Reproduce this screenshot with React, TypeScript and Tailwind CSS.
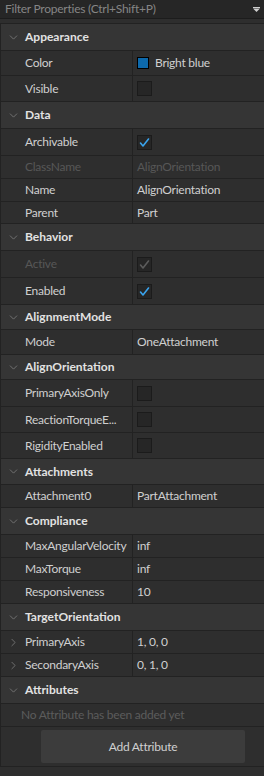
import { ChevronDown, ChevronRight } from 'lucide-react'

type Row =
  | { kind: 'header'; label: string; h: string }
  | { kind: 'text'; label: string; value?: string; h: string; muted?: boolean; expand?: boolean }
  | { kind: 'check'; label: string; checked?: boolean; h: string; muted?: boolean }
  | { kind: 'color'; label: string; value: string; h: string }
  | { kind: 'note'; label: string; h: string }

const rows: Row[] = [
  { kind: 'header', label: 'Appearance', h: 'h-[27px]' },
  { kind: 'color', label: 'Color', value: 'Bright blue', h: 'h-[25px]' },
  { kind: 'check', label: 'Visible', h: 'h-[26px]' },
  { kind: 'header', label: 'Data', h: 'h-[27px]' },
  { kind: 'check', label: 'Archivable', checked: true, h: 'h-[27px]' },
  { kind: 'text', label: 'ClassName', value: 'AlignOrientation', muted: true, h: 'h-[23px]' },
  { kind: 'text', label: 'Name', value: 'AlignOrientation', h: 'h-[23px]' },
  { kind: 'text', label: 'Parent', value: 'Part', h: 'h-[22px]' },
  { kind: 'header', label: 'Behavior', h: 'h-[27px]' },
  { kind: 'check', label: 'Active', checked: true, muted: true, h: 'h-[27px]' },
  { kind: 'check', label: 'Enabled', checked: true, h: 'h-[27px]' },
  { kind: 'header', label: 'AlignmentMode', h: 'h-[25px]' },
  { kind: 'text', label: 'Mode', value: 'OneAttachment', h: 'h-[25px]' },
  { kind: 'header', label: 'AlignOrientation', h: 'h-[25px]' },
  { kind: 'check', label: 'PrimaryAxisOnly', h: 'h-[27px]' },
  { kind: 'check', label: 'ReactionTorqueE...', h: 'h-[26px]' },
  { kind: 'check', label: 'RigidityEnabled', h: 'h-[26px]' },
  { kind: 'header', label: 'Attachments', h: 'h-[26px]' },
  { kind: 'text', label: 'Attachment0', value: 'PartAttachment', h: 'h-[23px]' },
  { kind: 'header', label: 'Compliance', h: 'h-[27px]' },
  { kind: 'text', label: 'MaxAngularVelocity', value: 'inf', h: 'h-[23px]' },
  { kind: 'text', label: 'MaxTorque', value: 'inf', h: 'h-[23px]' },
  { kind: 'text', label: 'Responsiveness', value: '10', h: 'h-[23px]' },
  { kind: 'header', label: 'TargetOrientation', h: 'h-[27px]' },
  { kind: 'text', label: 'PrimaryAxis', value: '1, 0, 0', expand: true, h: 'h-[23px]' },
  { kind: 'text', label: 'SecondaryAxis', value: '0, 1, 0', expand: true, h: 'h-[23px]' },
  { kind: 'header', label: 'Attributes', h: 'h-[27px]' },
  { kind: 'note', label: 'No Attribute has been added yet', h: 'h-[23px]' },
]

function CheckBox({ checked, muted }: { checked?: boolean; muted?: boolean }) {
  return (
    <div className="w-[15px] h-[15px] bg-[#262626] border border-[#1b1b1b]">
      {checked && (
        <svg width="13" height="13" viewBox="0 0 13 13">
          <path
            d="M2.5 7 L5 10 L10.5 3"
            fill="none"
            stroke={muted ? '#5c5c5c' : '#3aa4ee'}
            strokeWidth="1.6"
            strokeLinecap="round"
            strokeLinejoin="round"
          />
        </svg>
      )}
    </div>
  )
}

function PropRow({ row }: { row: Row }) {
  if (row.kind === 'header') {
    return (
      <div className={`${row.h} flex items-center bg-[#353535] border-b border-[#222222]`}>
        <div className="w-[24px] shrink-0 flex justify-center">
          <ChevronDown size={13} strokeWidth={1.25} className="text-[#8c8c8c]" />
        </div>
        <span className="font-bold text-[#e2e2e2] text-[12px]">{row.label}</span>
      </div>
    )
  }
  if (row.kind === 'note') {
    return (
      <div className={`${row.h} flex items-center pl-[20px] border-b border-[#222222] text-[#5c5c5c] text-[12px] tracking-[-0.25px]`}>
        {row.label}
      </div>
    )
  }
  const labelColor = 'muted' in row && row.muted ? 'text-[#575757]' : 'text-[#d0d0d0]'
  return (
    <div className={`${row.h} flex border-b border-[#222222] text-[12px] tracking-[-0.25px]`}>
      <div className="w-[132px] shrink-0 border-r border-[#222222] flex items-center overflow-hidden">
        <div className="w-[24px] shrink-0 flex justify-center">
          {row.kind === 'text' && row.expand && (
            <ChevronRight size={13} strokeWidth={1.25} className="text-[#8c8c8c]" />
          )}
        </div>
        <span className={`${labelColor} whitespace-nowrap`}>{row.label}</span>
      </div>
      <div className="flex-1 flex items-center pl-[4px]">
        {row.kind === 'text' && (
          <span className={row.muted ? 'text-[#575757]' : 'text-[#d0d0d0]'}>{row.value}</span>
        )}
        {row.kind === 'check' && <CheckBox checked={row.checked} muted={row.muted} />}
        {row.kind === 'color' && (
          <>
            <div className="w-[12px] h-[12px] bg-[#0d69ac] border border-black" />
            <span className="ml-[6px] text-[#d0d0d0]">{row.value}</span>
          </>
        )}
      </div>
    </div>
  )
}

export default function App() {
  return (
    <div className="w-[264px] h-[776px] bg-[#2e2e2e] overflow-hidden font-['Lato',sans-serif]">
      <div className="h-[19px] bg-[#262626] border-b border-[#1c1c1c] flex items-center pl-[5px] pr-[4px]">
        <span className="text-[#858585] text-[12px] tracking-[-0.25px]">Filter Properties (Ctrl+Shift+P)</span>
        <svg className="ml-auto" width="7" height="5" viewBox="0 0 7 5">
          <rect x="0" y="0" width="7" height="1" fill="#cfcfcf" />
          <path d="M0 1.5 H7 L3.5 5 Z" fill="#cfcfcf" />
        </svg>
      </div>
      <div className="h-[4px]" />
      <div className="border-l border-t border-[#222222]">
        {rows.map((row, i) => (
          <PropRow key={i} row={row} />
        ))}
        <div className="h-[40px] border-b border-[#222222] flex items-center">
          <div className="w-[204px] h-[33px] ml-[40px] bg-[#3c3c3c] rounded-[2px] flex items-center justify-center text-[#d0d0d0] text-[12px] tracking-[-0.25px]">
            Add Attribute
          </div>
        </div>
      </div>
    </div>
  )
}
